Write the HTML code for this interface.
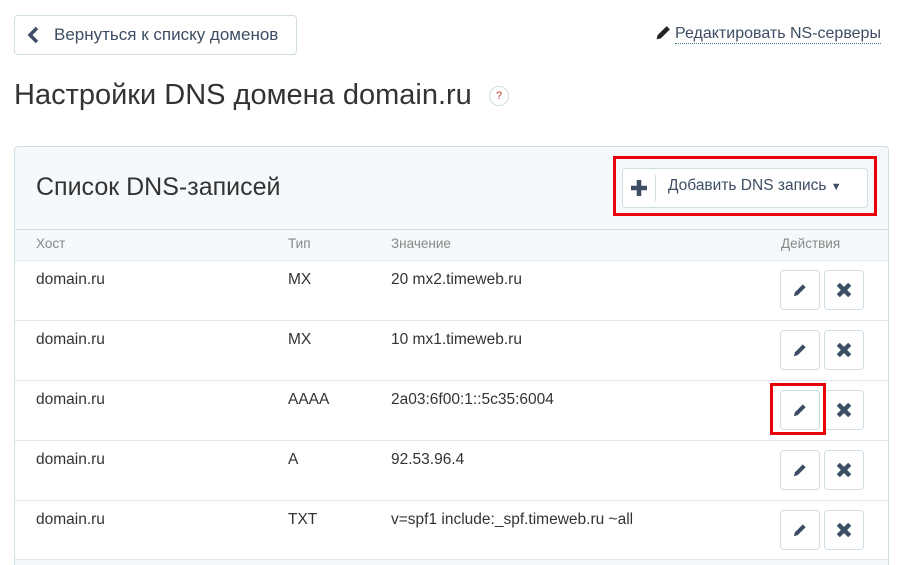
<!DOCTYPE html>
<html><head><meta charset="utf-8"><style>
*{box-sizing:border-box;margin:0;padding:0}
html,body{width:904px;height:565px;overflow:hidden}
body{background:#fff;font-family:"Liberation Sans",sans-serif;color:#333;position:relative}
.a{position:absolute;white-space:nowrap}
.back{left:14px;top:15px;width:283px;height:40px;border:1px solid #cfdde5;border-radius:4px}
.panel{left:14px;top:146px;width:875px;height:430px;border:1px solid #cfdde5;border-radius:4px;background:#f5f9fb;overflow:hidden}
.row{position:absolute;left:0;width:873px;height:60px;background:#fff;border-top:1px solid #dde7ec}
.row span{position:absolute;top:10px;font-size:15.5px;color:#333}
.btn{position:absolute;top:9px;width:40px;height:40px;border:1px solid #cfdde5;border-radius:4px;background:#fff;display:flex;align-items:center;justify-content:center}
</style></head><body>
<div class="a back"></div>
<svg class="a" style="left:26px;top:26px" width="16" height="18" viewBox="0 0 16 18"><path d="M11 2 L4 9 L11 16" stroke="#3d4d63" stroke-width="3.5" fill="none"/></svg>
<div class="a" style="left:54px;top:25px;font-size:17px;color:#3d4d63">Вернуться к списку доменов</div>
<svg class="a" style="left:655px;top:24px" width="17" height="17" viewBox="0 0 16 16"><path d="M1.5 14.5 L2.5 10.5 L11 2 L14 5 L5.5 13.5 Z" fill="#222"/></svg>
<div class="a" style="left:675px;top:25px;font-size:16px;color:#3d4d63;border-bottom:1px dotted #3d7a93;line-height:18px">Редактировать NS-серверы</div>
<div class="a" style="left:14px;top:79px;font-size:29px;color:#333;font-weight:300">Настройки DNS домена domain.ru</div>
<div class="a" style="left:489px;top:86px;width:20px;height:20px;border:1px solid #cfdde5;border-radius:50%;font-size:11px;color:#c0392b;text-align:center;line-height:18px">?</div>
<div class="a panel">
 <div class="a" style="left:21px;top:26px;font-size:25px;color:#333">Список DNS-записей</div>
 <div class="a" style="left:0;top:82px;width:873px;height:1px;background:#cfdde5"></div>
 <div class="a" style="left:21px;top:89px;font-size:13.5px;color:#888">Хост</div>
 <div class="a" style="left:273px;top:89px;font-size:13.5px;color:#888">Тип</div>
 <div class="a" style="left:376px;top:89px;font-size:13.5px;color:#888">Значение</div>
 <div class="a" style="left:766px;top:89px;font-size:13.5px;color:#888">Действия</div>
 <div class="a" style="left:607px;top:21px;width:246px;height:40px;border:1px solid #cfdde5;border-radius:4px;background:#fff"></div>
 <svg class="a" style="left:614px;top:31px" width="20" height="20" viewBox="0 0 20 20"><path d="M10 2V18M2 10H18" stroke="#3d4d63" stroke-width="4.5"/></svg>
 <div class="a" style="left:640px;top:28px;width:1px;height:26px;background:#cfdde5"></div>
 <div class="a" style="left:653px;top:30px;font-size:15.5px;color:#3d4d63">Добавить DNS запись <span style="font-size:11px">▼</span></div>
 <div class="a" style="left:598px;top:9px;width:264px;height:60px;border:3px solid #e8000b"></div>
</div>
<div class="a" style="left:14px;top:260px;width:875px;height:305px">
 <div class="row" style="top:0;left:1px"><span style="left:21px">domain.ru</span><span style="left:273px">MX</span><span style="left:376px">20 mx2.timeweb.ru</span>
  <div class="btn" style="left:765px"><svg width="18" height="18" viewBox="0 0 16 16"><path d="M2.5 13.5 L3.5 10 L10.5 3 L13 5.5 L6 12.5 Z" fill="#3d4d63"/></svg></div>
  <div class="btn" style="left:809px"><svg width="16" height="16" viewBox="0 0 14 14"><path d="M2 2L12 12M12 2L2 12" stroke="#3d4d63" stroke-width="3.8"/></svg></div></div>
 <div class="row" style="top:60px;left:1px"><span style="left:21px">domain.ru</span><span style="left:273px">MX</span><span style="left:376px">10 mx1.timeweb.ru</span>
  <div class="btn" style="left:765px"><svg width="18" height="18" viewBox="0 0 16 16"><path d="M2.5 13.5 L3.5 10 L10.5 3 L13 5.5 L6 12.5 Z" fill="#3d4d63"/></svg></div>
  <div class="btn" style="left:809px"><svg width="16" height="16" viewBox="0 0 14 14"><path d="M2 2L12 12M12 2L2 12" stroke="#3d4d63" stroke-width="3.8"/></svg></div></div>
 <div class="row" style="top:120px;left:1px"><span style="left:21px">domain.ru</span><span style="left:273px">AAAA</span><span style="left:376px">2a03:6f00:1::5c35:6004</span>
  <div class="btn" style="left:765px"><svg width="18" height="18" viewBox="0 0 16 16"><path d="M2.5 13.5 L3.5 10 L10.5 3 L13 5.5 L6 12.5 Z" fill="#3d4d63"/></svg></div>
  <div class="btn" style="left:809px"><svg width="16" height="16" viewBox="0 0 14 14"><path d="M2 2L12 12M12 2L2 12" stroke="#3d4d63" stroke-width="3.8"/></svg></div>
  <div style="position:absolute;left:755px;top:2px;width:56px;height:52px;border:3px solid #e8000b"></div></div>
 <div class="row" style="top:180px;left:1px"><span style="left:21px">domain.ru</span><span style="left:273px">A</span><span style="left:376px">92.53.96.4</span>
  <div class="btn" style="left:765px"><svg width="18" height="18" viewBox="0 0 16 16"><path d="M2.5 13.5 L3.5 10 L10.5 3 L13 5.5 L6 12.5 Z" fill="#3d4d63"/></svg></div>
  <div class="btn" style="left:809px"><svg width="16" height="16" viewBox="0 0 14 14"><path d="M2 2L12 12M12 2L2 12" stroke="#3d4d63" stroke-width="3.8"/></svg></div></div>
 <div class="row" style="top:240px;left:1px;border-bottom:1px solid #dde7ec"><span style="left:21px">domain.ru</span><span style="left:273px">TXT</span><span style="left:376px">v=spf1 include:_spf.timeweb.ru ~all</span>
  <div class="btn" style="left:765px"><svg width="18" height="18" viewBox="0 0 16 16"><path d="M2.5 13.5 L3.5 10 L10.5 3 L13 5.5 L6 12.5 Z" fill="#3d4d63"/></svg></div>
  <div class="btn" style="left:809px"><svg width="16" height="16" viewBox="0 0 14 14"><path d="M2 2L12 12M12 2L2 12" stroke="#3d4d63" stroke-width="3.8"/></svg></div></div>
</div>
</body></html>
